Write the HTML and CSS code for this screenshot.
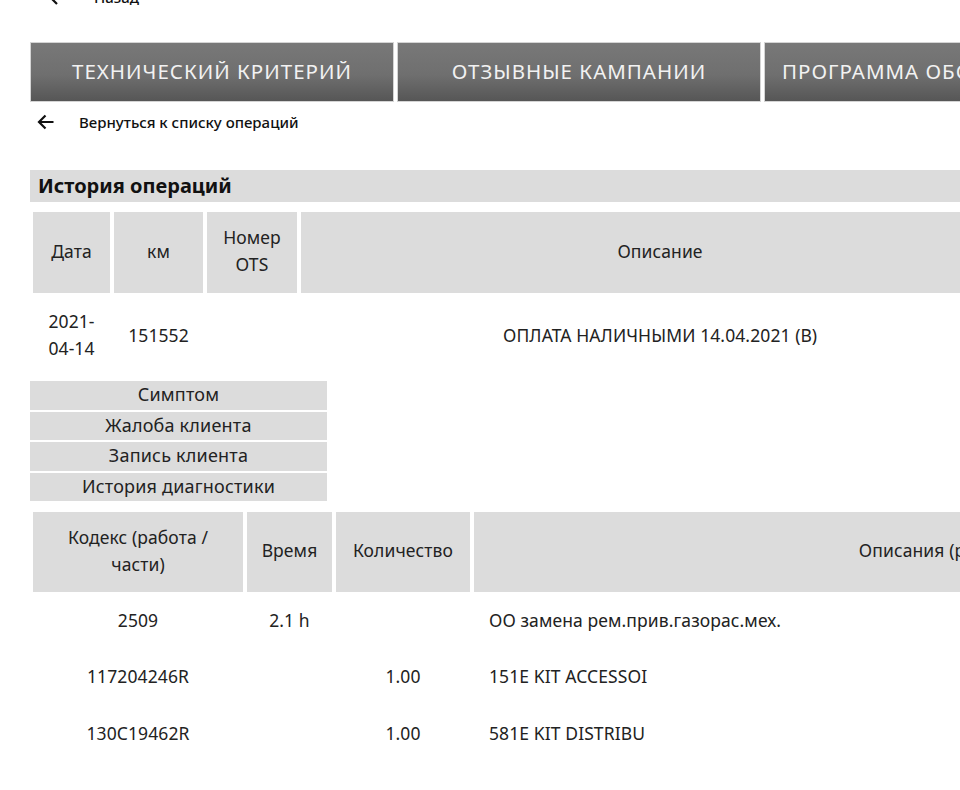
FILE: index.html
```html
<!DOCTYPE html>
<html lang="ru">
<head>
<meta charset="utf-8">
<title>История операций</title>
<link rel="stylesheet" href="styles.css">
</head>
<body>
<div class="page">
  <div class="top-back">
    <svg class="top-arrow" width="18" height="16" viewBox="0 0 18 16"><path d="M9 1 L2 8 L9 15 M2 8 H17" fill="none" stroke="#111" stroke-width="2.2"/></svg>
    <span>Назад</span>
  </div>

  <nav class="tabs">
    <div class="tab">ТЕХНИЧЕСКИЙ КРИТЕРИЙ</div>
    <div class="tab">ОТЗЫВНЫЕ КАМПАНИИ</div>
    <div class="tab">ПРОГРАММА ОБСЛУЖИВАНИЯ</div>
  </nav>

  <div class="back-link">
    <svg class="back-arrow" width="17" height="16" viewBox="0 0 17 16"><path d="M8.5 1.5 L2 8 L8.5 14.5 M2 8 H16.5" fill="none" stroke="#111" stroke-width="2.2"/></svg>
    <span>Вернуться к списку операций</span>
  </div>

  <h2 class="section-title">История операций</h2>

  <table class="ops">
    <colgroup><col class="c-date"><col class="c-km"><col class="c-ots"><col class="c-desc"></colgroup>
    <thead>
      <tr><th>Дата</th><th>км</th><th>Номер OTS</th><th>Описание</th></tr>
    </thead>
    <tbody>
      <tr><td>2021-04-14</td><td>151552</td><td></td><td>ОПЛАТА НАЛИЧНЫМИ 14.04.2021 (В)</td></tr>
    </tbody>
  </table>

  <div class="labels">
    <div class="label">Симптом</div>
    <div class="label">Жалоба клиента</div>
    <div class="label">Запись клиента</div>
    <div class="label">История диагностики</div>
  </div>

  <table class="parts">
    <colgroup><col class="p-code"><col class="p-time"><col class="p-qty"><col class="p-desc"></colgroup>
    <thead>
      <tr><th class="wrap">Кодекс (работа / части)</th><th>Время</th><th>Количество</th><th>Описания (работ / частей)</th></tr>
    </thead>
    <tbody>
      <tr><td>2509</td><td>2.1 h</td><td></td><td class="left">ОО замена рем.прив.газорас.мех.</td></tr>
      <tr><td>117204246R</td><td></td><td>1.00</td><td class="left">151E KIT ACCESSOI</td></tr>
      <tr><td>130C19462R</td><td></td><td>1.00</td><td class="left">581E KIT DISTRIBU</td></tr>
    </tbody>
  </table>
</div>
</body>
</html>
```
FILE: styles.css
```css
html, body {
  margin: 0;
  padding: 0;
  background: #fff;
  overflow: hidden;
}
body {
  font-family: "Noto Sans", "Open Sans", sans-serif;
  color: #222;
  width: 960px;
  height: 790px;
}
.page {
  width: 1700px;
  padding-left: 30px;
}
.top-back {
  display: flex;
  align-items: center;
  height: 20px;
  margin-top: -13px;
  font-size: 15px;
  font-weight: 500;
  color: #111;
}
.top-arrow {
  margin-left: 18px;
  margin-right: 28px;
}
.tabs {
  display: flex;
  gap: 3px;
  margin-top: 35px;
}
.tab {
  width: 364px;
  height: 60px;
  flex: none;
  box-sizing: border-box;
  border: 1px solid #d4d4d4;
  background: linear-gradient(#787878 0%, #6f6f6f 55%, #565656 100%);
  color: #f2f2f2;
  font-size: 20.5px;
  letter-spacing: 1px;
  display: flex;
  align-items: center;
  justify-content: center;
  white-space: nowrap;
  padding-bottom: 3px;
}
.back-link {
  display: flex;
  align-items: center;
  height: 22px;
  margin-top: 9px;
  font-size: 15px;
  font-weight: 500;
  color: #111;
}
.back-arrow {
  margin-left: 7px;
  margin-right: 25px;
}
.section-title {
  margin: 37px 0 0 0;
  height: 32px;
  line-height: 32px;
  background: #dcdcdc;
  font-size: 20px;
  font-weight: 700;
  padding-left: 8px;
  color: #111;
}
table {
  border-collapse: separate;
  border-spacing: 4px 0;
  margin-left: -1px;
  table-layout: fixed;
  font-size: 17.5px;
  letter-spacing: 0.1px;
  line-height: 27px;
  color: #222;
}
th {
  background: #dcdcdc;
  font-weight: 400;
  text-align: center;
  padding: 0 8px 3px;
}
th.wrap { padding: 0 24px 3px; }
td {
  text-align: center;
  padding: 0 8px;
}
td.left { text-align: left; padding-left: 15px; }

.ops { margin-top: 10px; }
.ops th { height: 78px; }
.ops td { height: 84px; padding-bottom: 2px; }
.c-date { width: 77px; }
.c-km { width: 89px; }
.c-ots { width: 90px; }
.c-desc { width: 718px; }
.ops td:first-child { padding: 0 10px 2px; }

.labels {
  width: 297px;
  display: flex;
  flex-direction: column;
  gap: 2px;
  margin-top: 2px;
}
.label {
  height: 28.5px;
  line-height: 27px;
  background: #dcdcdc;
  text-align: center;
  font-size: 18px;
  letter-spacing: 0.2px;
  color: #222;
}

.parts { margin-top: 11px; }
.parts th { height: 77px; }
.parts td { height: 56.5px; }
.p-code { width: 210px; }
.p-time { width: 85px; }
.p-qty { width: 134px; }
.p-desc { width: 994px; }
```
